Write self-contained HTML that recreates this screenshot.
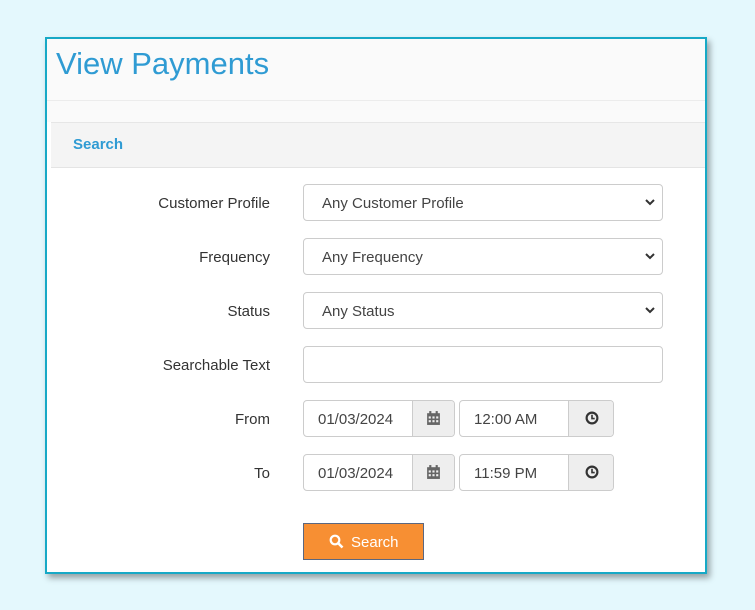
<!DOCTYPE html>
<html><head><style>
body{margin:0;width:755px;height:610px;background:#e4f8fd;font-family:"Liberation Sans",sans-serif;position:relative;overflow:hidden}
.panel{position:absolute;left:45px;top:37px;width:658px;height:533px;border:2px solid #17a9c6;background:#fff;box-shadow:3px 4px 6px rgba(0,0,0,.35)}
.hdr{position:absolute;left:0;top:0;right:0;height:61px;background:#fafafa;border-bottom:1px solid #ececec}
.hdr h1{margin:0;position:absolute;left:9px;top:7px;font-size:31px;font-weight:normal;color:#2f9bd3}
.gap{position:absolute;left:0;right:0;top:62px;height:21px;background:#fafafa}
.sh{position:absolute;left:4px;right:0;top:83px;height:44px;background:#f4f4f4;border-top:1px solid #e6e6e6;border-bottom:1px solid #e4e4e4}
.sh span{position:absolute;left:22px;top:13px;font-size:15px;font-weight:bold;color:#2f9bd3}
.lbl{position:absolute;right:435px;font-size:15px;color:#333;text-align:right}
.in{position:absolute;left:256px;width:358px;height:35px;border:1px solid #ccc;border-radius:4px;background:#fff;font-size:15px;color:#444;box-sizing:content-box}
.in span{position:absolute;left:18px;top:10px}
.chev{position:absolute;right:6px;top:12px}
.grp{position:absolute;height:35px;border:1px solid #ccc;border-radius:4px;background:#fff;font-size:15px;color:#444;overflow:hidden}
.grp span{position:absolute;top:10px}
.add{position:absolute;right:0;top:0;bottom:0;background:#eee;border-left:1px solid #ccc}
.btn{position:absolute;left:256px;top:484px;width:119px;height:35px;background:#f78f33;border:1px solid #5b6780;color:#fff;font-size:15px}
</style></head><body>
<div class="panel">
<div class="hdr"><h1>View Payments</h1></div>
<div class="gap"></div>
<div class="sh"><span>Search</span></div>

<div class="lbl" style="top:156px">Customer Profile</div>
<div class="in" style="top:145px"><span>Any Customer Profile</span><svg class="chev" width="12" height="10" viewBox="0 0 12 10"><path d="M2 3l4 4 4-4" stroke="#333" stroke-width="2" fill="none"/></svg></div>
<div class="lbl" style="top:210px">Frequency</div>
<div class="in" style="top:199px"><span>Any Frequency</span><svg class="chev" width="12" height="10" viewBox="0 0 12 10"><path d="M2 3l4 4 4-4" stroke="#333" stroke-width="2" fill="none"/></svg></div>
<div class="lbl" style="top:264px">Status</div>
<div class="in" style="top:253px"><span>Any Status</span><svg class="chev" width="12" height="10" viewBox="0 0 12 10"><path d="M2 3l4 4 4-4" stroke="#333" stroke-width="2" fill="none"/></svg></div>
<div class="lbl" style="top:318px">Searchable Text</div>
<div class="in" style="top:307px"></div>

<div class="lbl" style="top:372px">From</div>
<div class="grp" style="left:256px;top:361px;width:150px"><span style="left:14px">01/03/2024</span><div class="add" style="width:41px"><svg style="position:absolute;left:13px;top:9px" width="15" height="16" viewBox="0 0 14 15"><rect x="1" y="3" width="12" height="11" fill="#666"/><g fill="#eee"><rect x="2.5" y="6" width="2" height="2"/><rect x="6" y="6" width="2" height="2"/><rect x="9.5" y="6" width="2" height="2"/><rect x="2.5" y="9.5" width="2" height="2"/><rect x="6" y="9.5" width="2" height="2"/><rect x="9.5" y="9.5" width="2" height="2"/></g><rect x="3" y="1" width="2" height="3" fill="#666"/><rect x="9" y="1" width="2" height="3" fill="#666"/></svg></div></div>
<div class="grp" style="left:412px;top:361px;width:153px"><span style="left:14px">12:00 AM</span><div class="add" style="width:44px"><svg style="position:absolute;left:16px;top:10px" width="14" height="14" viewBox="0 0 13 13"><circle cx="6.5" cy="6.5" r="5" stroke="#333" stroke-width="2" fill="none"/><path d="M6.5 3.5v3.5h2.5" stroke="#333" stroke-width="1.5" fill="none"/></svg></div></div>

<div class="lbl" style="top:426px">To</div>
<div class="grp" style="left:256px;top:415px;width:150px"><span style="left:14px">01/03/2024</span><div class="add" style="width:41px"><svg style="position:absolute;left:13px;top:9px" width="15" height="16" viewBox="0 0 14 15"><rect x="1" y="3" width="12" height="11" fill="#666"/><g fill="#eee"><rect x="2.5" y="6" width="2" height="2"/><rect x="6" y="6" width="2" height="2"/><rect x="9.5" y="6" width="2" height="2"/><rect x="2.5" y="9.5" width="2" height="2"/><rect x="6" y="9.5" width="2" height="2"/><rect x="9.5" y="9.5" width="2" height="2"/></g><rect x="3" y="1" width="2" height="3" fill="#666"/><rect x="9" y="1" width="2" height="3" fill="#666"/></svg></div></div>
<div class="grp" style="left:412px;top:415px;width:153px"><span style="left:14px">11:59 PM</span><div class="add" style="width:44px"><svg style="position:absolute;left:16px;top:10px" width="14" height="14" viewBox="0 0 13 13"><circle cx="6.5" cy="6.5" r="5" stroke="#333" stroke-width="2" fill="none"/><path d="M6.5 3.5v3.5h2.5" stroke="#333" stroke-width="1.5" fill="none"/></svg></div></div>

<div class="btn"><svg style="position:absolute;left:25px;top:10px" width="15" height="15" viewBox="0 0 15 15"><circle cx="6" cy="6" r="4.3" stroke="#fff" stroke-width="2.2" fill="none"/><path d="M9 9l4.5 4.5" stroke="#fff" stroke-width="2.6"/></svg><span style="position:absolute;left:47px;top:10px">Search</span></div>
</div>
</body></html>
